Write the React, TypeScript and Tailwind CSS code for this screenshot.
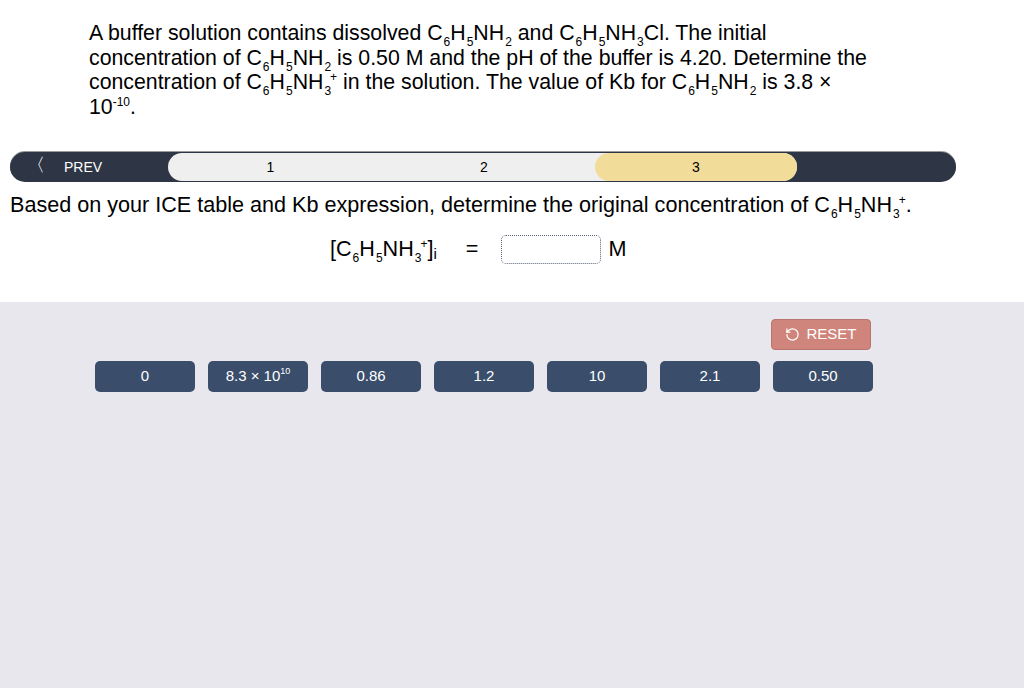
import React from "react";
import { RotateCcw } from "lucide-react";

const Sub = ({ c }: { c: string }) => (
  <span className="relative top-[6px] text-[12px] leading-none ml-[1px]">{c}</span>
);

const Aniline = ({ n, plus }: { n: string; plus?: boolean }) => (
  <span>
    C<Sub c="6" />H<Sub c="5" />NH<Sub c={n} />
    {plus ? <span className="relative top-[-8px] ml-[-1px] text-[12px] leading-none">+</span> : null}
  </span>
);

const answers = ["0", "8.3 × 10", "0.86", "1.2", "10", "2.1", "0.50"];

export default function App() {
  return (
    <div className="w-[1024px] h-[688px] bg-white flex flex-col overflow-hidden" style={{ fontFamily: '"Liberation Sans", Arial, sans-serif' }}>
      <div className="pl-[89px] pt-[21px] text-[21.3px] leading-[24.5px] text-black whitespace-nowrap">
        A buffer solution contains dissolved <Aniline n="2" /> and <Aniline n="3" />Cl. The initial
        <br />
        concentration of <Aniline n="2" /> is 0.50 M and the pH of the buffer is 4.20. Determine the
        <br />
        concentration of <Aniline n="3" plus /> in the solution. The value of Kb for <Aniline n="2" /> is 3.8 ×
        <br />
        10<span className="relative top-[-8px] text-[12px] leading-none">-10</span>.
      </div>

      <div className="mt-[33px] ml-[10px] w-[946px] h-[30px] rounded-full bg-[#2e3545] flex items-center shadow-[0_-1px_0_#9a9a9a] text-[14px]">
        <div className="w-[158px] flex items-center text-white">
          <span className="ml-[17px] text-[18px] font-light leading-none relative top-[-2px]" style={{ fontFamily: '"DejaVu Sans", sans-serif' }}>〈</span>
          <span className="ml-[19px]">PREV</span>
        </div>
        <div className="w-[629px] h-[28px] rounded-full bg-[#efefef] flex items-center text-black">
          <div className="w-[205px] text-center">1</div>
          <div className="w-[222px] text-center">2</div>
          <div className="w-[202px] h-[28px] rounded-full bg-[#f2dc9a] flex items-center justify-center">3</div>
        </div>
      </div>

      <div className="ml-[10px] mt-[10px] text-[21.6px] leading-[26px] text-black whitespace-nowrap">
        Based on your ICE table and Kb expression, determine the original concentration of <Aniline n="3" plus />.
      </div>

      <div className="flex items-center mt-[16px] ml-[330px] text-[21.6px] text-black h-[30px]">
        <span>
          [<Aniline n="3" plus />]<span className="text-[15px] relative top-[3px]">i</span>
        </span>
        <span className="ml-[29px]">=</span>
        <div className="ml-[23px] w-[100px] h-[29px] rounded-[5px] border border-dotted border-[#5a6478] bg-white shrink-0" />
        <span className="ml-[7px]">M</span>
      </div>

      <div className="mt-[38px] flex-1 bg-[#e8e7ed] pt-[17px]">
        <div className="ml-[771px] w-[100px] h-[31px] rounded-[4px] bg-[#cf857b] border border-[#b9766e] text-white text-[15px] flex items-center justify-center gap-[6px]">
          <RotateCcw size={15} strokeWidth={2} />
          <span>RESET</span>
        </div>
        <div className="ml-[95px] mt-[11px] flex gap-[13px]">
          {answers.map((a, i) => (
            <div key={i} className="w-[100px] h-[31px] rounded-[5px] bg-[#3a4e6c] text-white text-[15px] flex items-center justify-center">
              {a}
              {i === 1 ? <span className="relative top-[-5px] text-[9px] leading-none">10</span> : null}
            </div>
          ))}
        </div>
      </div>
    </div>
  );
}
